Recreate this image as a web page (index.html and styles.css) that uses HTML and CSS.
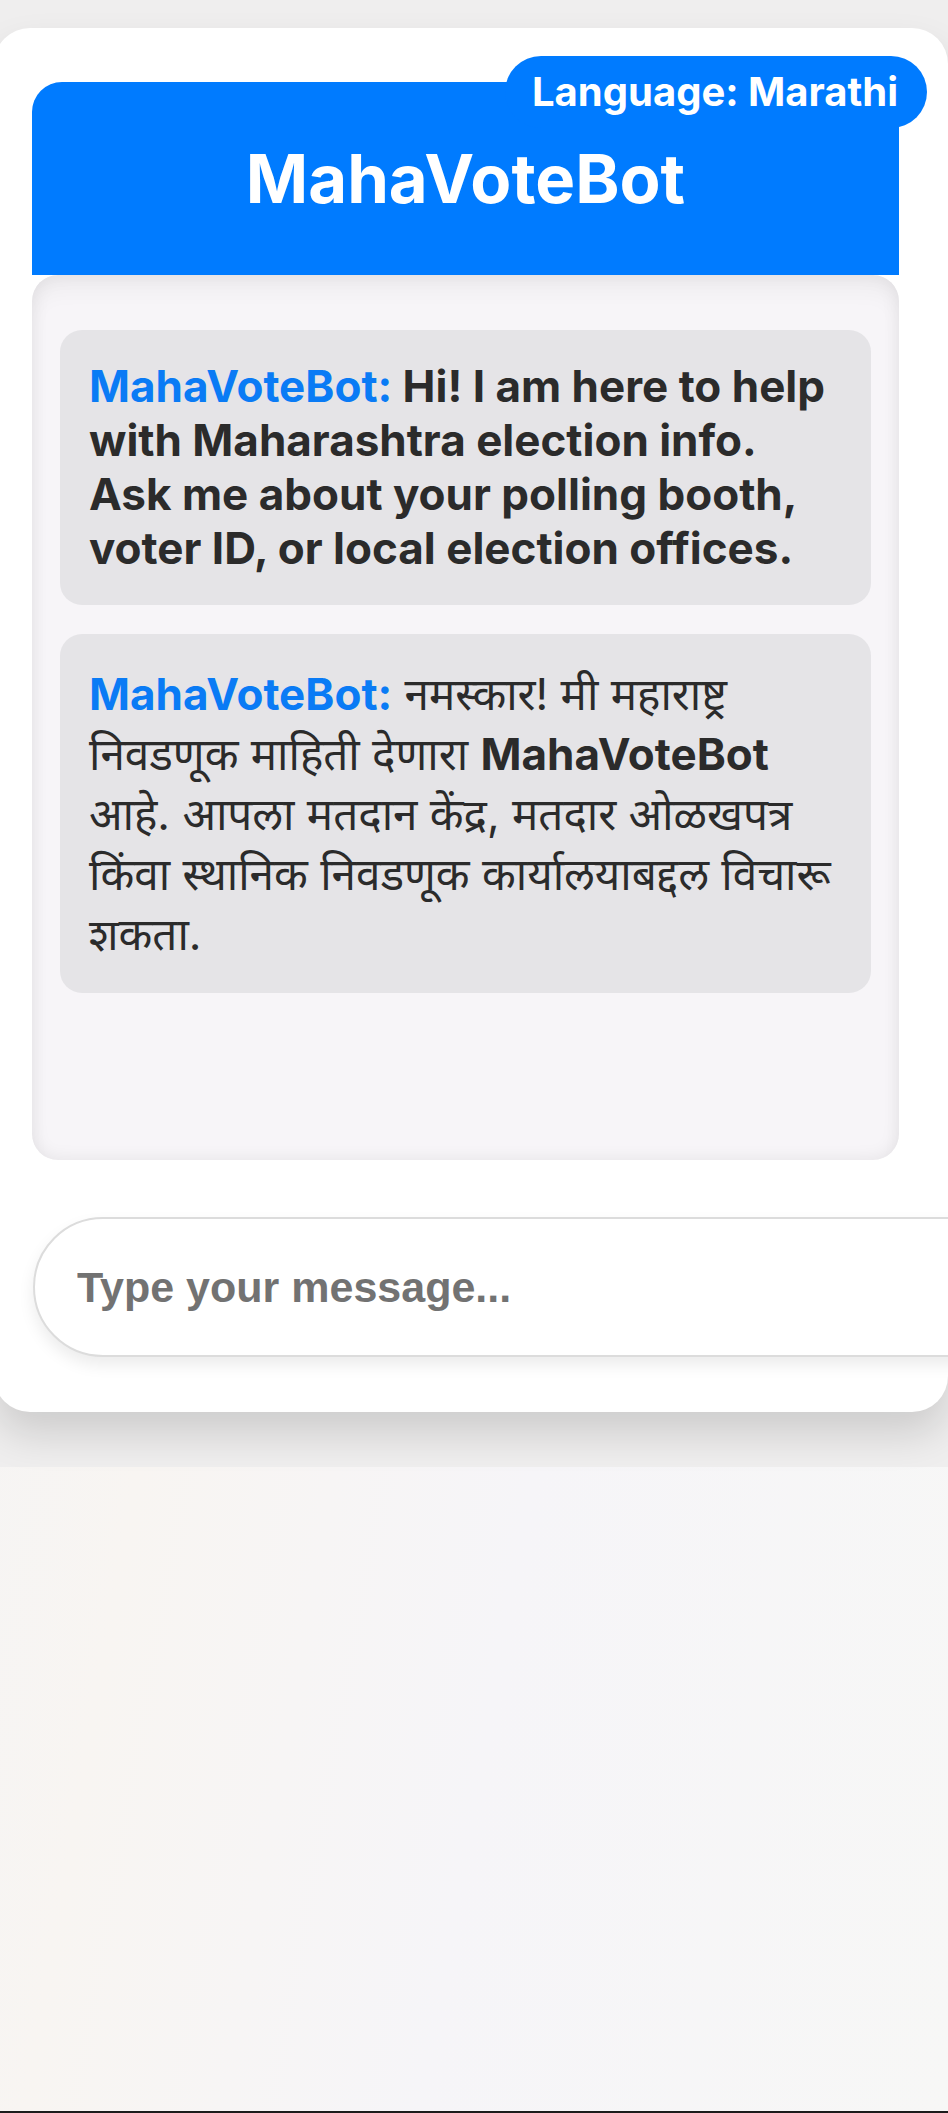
FILE: index.html
```html
<!DOCTYPE html>
<html lang="mr">

<head>
  <meta charset="UTF-8">
  <meta name="viewport" content="width=device-width, initial-scale=1.0">
  <title>MahaVoteBot</title>
  <link rel="stylesheet" href="styles.css">
</head>

<body>
  <div class="screen">
    <div class="chat-card">
      <div class="chat-header">
        <span class="lang-badge">Language: Marathi</span>
        <h1>MahaVoteBot</h1>
      </div>

      <div class="chat-window" id="chat-window">
        <div class="message bot bold">
          <span class="sender">MahaVoteBot:</span> Hi! I am here to help with Maharashtra election info. Ask me about your polling booth, voter ID, or local election offices.
        </div>
        <div class="message bot">
          <span class="sender">MahaVoteBot:</span> नमस्कार! मी महाराष्ट्र निवडणूक माहिती देणारा <b>MahaVoteBot</b> आहे. आपला मतदान केंद्र, मतदार ओळखपत्र किंवा स्थानिक निवडणूक कार्यालयाबद्दल विचारू शकता.
        </div>
      </div>

      <input type="text" class="chat-input" placeholder="Type your message...">
    </div>
  </div>
  <div class="page-rest"></div>
  <div class="page-edge"></div>
</body>

</html>
```

FILE: styles.css
```css
* {
  margin: 0;
  padding: 0;
  box-sizing: border-box;
}

html {
  background: linear-gradient(100deg, #f3f4f6 0%, #f8f5f2 30%, #f6f5f8 60%, #f7f7f6 100%);
}

body {
  font-family: Inter, "Noto Sans", "Noto Sans Devanagari", sans-serif;
  color: #2b2b2b;
  overflow-x: hidden;
}

.screen {
  height: 1467px;
  padding-top: 28px;
  background: #efeeee;
}

.chat-card {
  width: 954px;
  margin-left: -6px;
  padding: 54px 49px 55px 38px;
  background: white;
  border-radius: 36px;
  box-shadow: 0 22px 40px rgba(0, 0, 0, 0.14);
}

.chat-header {
  position: relative;
  height: 193px;
  background: #007bff;
  border-radius: 30px 30px 0 0;
  display: flex;
  justify-content: center;
  align-items: center;
}

.chat-header h1 {
  color: white;
  font-size: 67px;
  font-weight: 700;
}

.lang-badge {
  position: absolute;
  top: -26px;
  right: -28px;
  height: 72px;
  line-height: 72px;
  padding: 0 29px 0 27px;
  background: #007bff;
  color: white;
  border-radius: 36px;
  font-size: 40px;
  font-weight: 700;
}

.chat-window {
  height: 885px;
  padding: 55px 28px;
  background: #f7f5f8;
  border-radius: 26px;
  box-shadow: inset 0 0 18px rgba(0, 0, 0, 0.08), inset 0 18px 20px rgba(0, 0, 0, 0.03);
  display: flex;
  flex-direction: column;
  gap: 29px;
}

.message {
  background: #e5e4e7;
  border-radius: 22px;
  padding: 29px 29px 30px;
  font-size: 44px;
  line-height: normal;
}

.message.bold {
  font-weight: 700;
}

.message b,
.sender {
  font-weight: 700;
}

.sender {
  color: #0a7bf5;
}

.chat-input {
  display: block;
  width: calc(100% + 140px);
  height: 140px;
  margin: 57px 0 0 1px;
  padding: 0 42px;
  border: 2px solid #dcdcdc;
  border-radius: 70px;
  background: white;
  box-shadow: 0 8px 16px rgba(0, 0, 0, 0.08);
  font-family: "Liberation Sans", Arial, sans-serif;
  font-size: 43px;
  font-weight: 700;
  outline: none;
}

.chat-input::placeholder {
  color: #727272;
}

.page-rest {
  height: 644px;
}

.page-edge {
  height: 2px;
  background: #1c1c1c;
}
```
